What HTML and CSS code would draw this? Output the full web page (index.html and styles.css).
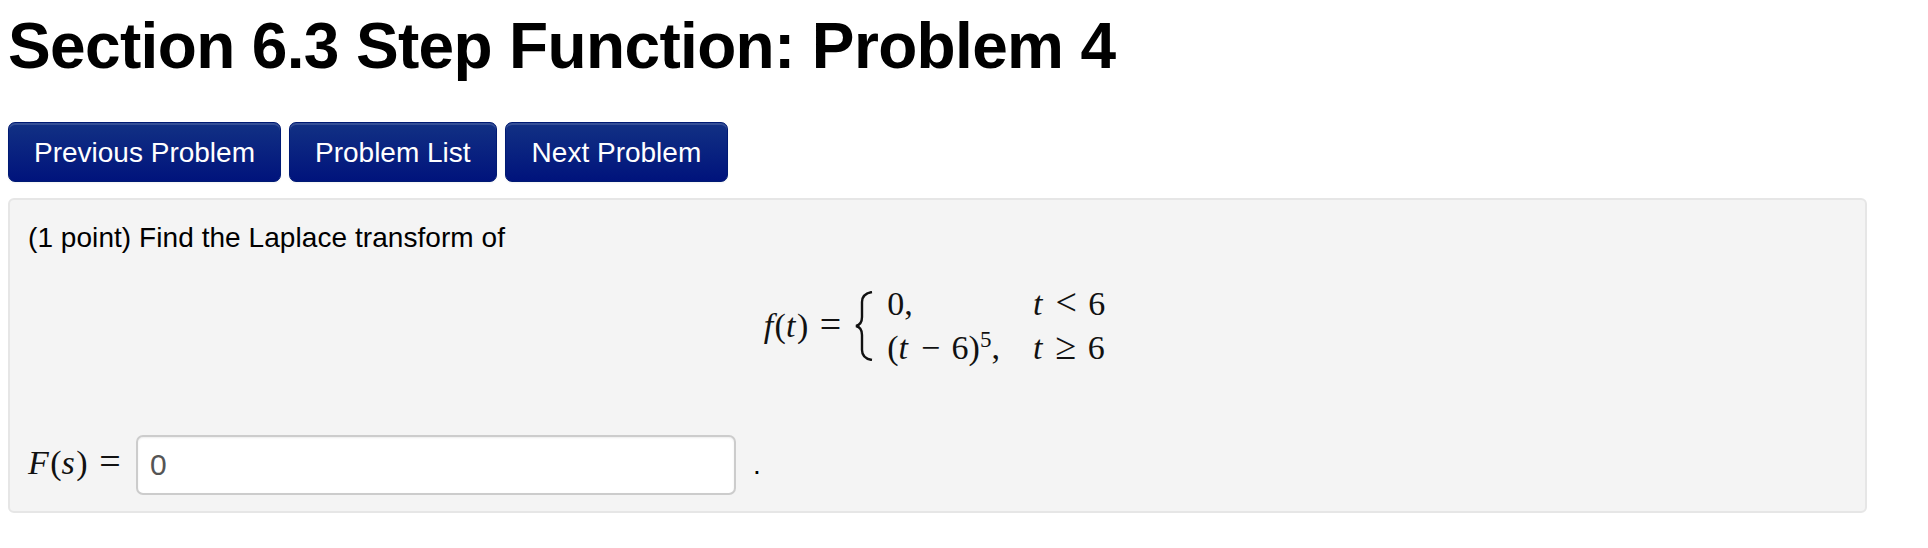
FILE: index.html
```html
<!DOCTYPE html>
<html>
<head lang="en">
    <meta charset="UTF-8">
    <title>Section 6.3 Step Function: Problem 4</title>
    <link rel="stylesheet" href="styles.css">
</head>
<body>

<h1 class="page-title">Section 6.3 Step Function: Problem 4</h1>

<div class="nav-buttons">
    <a class="nav-btn" href="javascript:void(0);">Previous Problem</a>
    <a class="nav-btn" href="javascript:void(0);">Problem List</a>
    <a class="nav-btn nav-btn-next" href="javascript:void(0);">Next Problem</a>
</div>

<div class="problem">
    <p class="problem-text">(1 point) Find the Laplace transform of</p>

    <div class="display-math">
        <span class="math"><i>f</i>(<i>t</i>) <span class="rel">=</span></span>
        <svg class="brace" width="18" height="70" viewBox="0 0 18 70">
            <path d="M17 1C11 2 7 5 7 11V26C7 31 5 34 1 35C5 36 7 39 7 44V59C7 65 11 68 17 69" fill="none" stroke="#111" stroke-width="2.400"/>
        </svg>
        <div class="cases math">
            <span>0,</span>
            <span><i>t</i> <span class="rel">&lt;</span> 6</span>
            <span>(<i>t</i> &minus; 6)<sup>5</sup>,</span>
            <span><i>t</i> <span class="rel">&ge;</span> 6</span>
        </div>
    </div>

    <div class="answer-row">
        <span class="math answer-label"><i>F</i>(<i>s</i>) <span class="rel">=</span></span>
        <input class="answer-input" type="text" value="0">
        <span class="answer-dot">.</span>
    </div>
</div>

</body>
</html>
```

FILE: styles.css
```css
html, body, h1, p {
    padding: 0px;
    margin: 0px;
}

body {
    padding: 0px 8px;
    background: #ffffff;
    color: #000000;
    font-family: "Liberation Sans", Arial, sans-serif;
}

.page-title {
    height: 122px;
    padding-top: 8px;
    box-sizing: border-box;
    font-size: 64px;
    line-height: 76px;
    font-weight: bold;
    letter-spacing: -0.65px;
}

.nav-buttons {
    display: flex;
    gap: 8px;
}

.nav-btn {
    display: block;
    height: 60px;
    padding: 0px 25px;
    box-sizing: border-box;
    border: 1px solid #001a73;
    border-radius: 7px;
    background: linear-gradient(#123184, #00137c);
    box-shadow: inset 0px 2px 0px rgba(255, 255, 255, 0.15), 0px 1px 2px rgba(0, 0, 0, 0.05);
    color: #ffffff;
    font-size: 28px;
    line-height: 60px;
    text-decoration: none;
}

.nav-btn-next {
    padding: 0px 26px;
}

.problem {
    width: 1859px;
    height: 315px;
    margin-top: 16px;
    padding: 20px 18px 0px 18px;
    box-sizing: border-box;
    border: 2px solid #e6e6e6;
    border-radius: 6px;
    background: #f4f4f4;
}

.problem-text {
    font-size: 28px;
    line-height: 36px;
    letter-spacing: 0.06px;
}

.display-math {
    display: flex;
    justify-content: center;
    align-items: center;
    gap: 14px;
    margin: 26px 6px 0px 0px;
}

.math {
    font-family: "Liberation Serif", "Times New Roman", serif;
    font-size: 34px;
    color: #111111;
    word-spacing: 3px;
}

.math i {
    letter-spacing: 1.5px;
}

.rel {
    font-size: 38px;
    line-height: 0px;
}

.cases {
    display: grid;
    grid-template-columns: auto auto;
    column-gap: 33px;
    line-height: 44px;
}

.cases sup {
    font-size: 23px;
    line-height: 0px;
}

.answer-row {
    display: flex;
    align-items: center;
    margin-top: 65px;
}

.answer-label {
    width: 108px;
    margin-bottom: 4px;
}

.answer-input {
    width: 600px;
    height: 60px;
    padding: 0px 12px;
    box-sizing: border-box;
    border: 2px solid #cccccc;
    border-radius: 7px;
    background: #ffffff;
    box-shadow: inset 0px 1px 2px rgba(0, 0, 0, 0.08);
    color: #555555;
    font-family: "Liberation Sans", Arial, sans-serif;
    font-size: 30px;
}

.answer-dot {
    margin-left: 17px;
    font-size: 28px;
}
```
